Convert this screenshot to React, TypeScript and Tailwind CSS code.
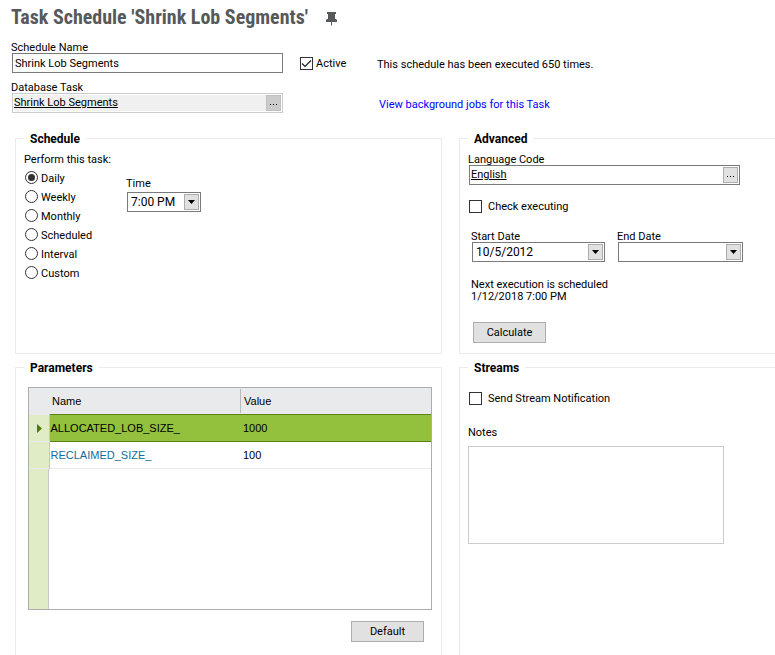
import type { ReactNode } from 'react';

function Pin() {
  return (
    <svg width="11" height="14" viewBox="0 0 11 14" fill="#56595c" aria-hidden="true">
      <path d="M1 0h9v2H9v5h1l1 1v2H6v3.500H5V10H0V8l1-1h1V2H1z" />
    </svg>
  );
}

function Panel({ title, open = false, right = false, children }: {
  title: string;
  open?: boolean;
  right?: boolean;
  children: ReactNode;
}) {
  return (
    <fieldset
      className={`min-w-0 border-[#ebebeb] border-t border-l ${right ? '' : 'border-r'} ${open ? '' : 'border-b'}`}
    >
      <legend className="ml-2 px-1.5 pt-0.5 text-xs leading-[15px] font-bold">{title}</legend>
      {children}
    </fieldset>
  );
}

function FieldLabel({ htmlFor, children }: { htmlFor: string; children: ReactNode }) {
  return (
    <label htmlFor={htmlFor} className="-ml-px block h-[13px] pt-px leading-[13px]">
      {children}
    </label>
  );
}

function Check({ id, label, checked, wide }: { id: string; label: string; checked?: boolean; wide?: boolean }) {
  return (
    <label htmlFor={id} className={`flex items-center ${wide ? 'gap-1.5' : 'gap-[3px]'}`}>
      <span className="grid size-[13px] shrink-0">
        <input
          id={id}
          type="checkbox"
          defaultChecked={checked}
          className="peer col-start-1 row-start-1 size-[13px] appearance-none border border-[#333] bg-white"
        />
        <svg
          className="pointer-events-none col-start-1 row-start-1 hidden size-[13px] peer-checked:block"
          viewBox="0 0 13 13"
          fill="none"
          stroke="#222"
          strokeWidth="1.2"
          aria-hidden="true"
        >
          <path d="M2 6.500L5 9.500l6-6" />
        </svg>
      </span>
      {label}
    </label>
  );
}

function Drop({ id, label, value, width, spaced }: {
  id: string;
  label: string;
  value: string;
  width: string;
  spaced?: boolean;
}) {
  return (
    <div className={`flex flex-col ${spaced ? 'gap-[3px]' : ''} ${width}`}>
      <FieldLabel htmlFor={id}>{label}</FieldLabel>
      <div className="grid h-5 border border-[#7a7a7a] bg-white">
        <select
          id={id}
          defaultValue={value}
          className="col-start-1 row-start-1 w-full appearance-none bg-transparent pl-[3px] text-xs leading-4 outline-none"
        >
          <option value={value}>{value}</option>
        </select>
        <span className="pointer-events-none col-start-1 row-start-1 mr-px grid h-4 w-[15px] place-items-center self-center justify-self-end border border-[#adadad] bg-[#e1e1e1]">
          <svg width="7" height="4" viewBox="0 0 7 4" aria-hidden="true">
            <path d="M0 0h7L3.500 4z" />
          </svg>
        </span>
      </div>
    </div>
  );
}

function Lookup({ id, label, value, muted }: { id: string; label: string; value: string; muted?: boolean }) {
  return (
    <div className="w-[271px]">
      <FieldLabel htmlFor={id}>{label}</FieldLabel>
      <div className={`flex h-5 border p-px ${muted ? 'border-[#ccc]' : 'border-[#7a7a7a]'}`}>
        <input
          id={id}
          readOnly
          defaultValue={value}
          className={`h-4 min-w-0 flex-1 leading-4 underline underline-offset-1 outline-none ${muted ? 'bg-[#f0f0f0]' : 'bg-white'}`}
        />
        <button
          type="button"
          aria-label={`Browse ${label}`}
          className={`grid w-[15px] place-items-center border ${muted ? 'border-[#bfbfbf] bg-[#ccc]' : 'border-[#adadad] bg-[#e1e1e1]'}`}
        >
          <svg width="8" height="6" viewBox="0 0 8 6" shapeRendering="crispEdges" aria-hidden="true">
            <path d="M0 4h1v1H0zM3 4h1v1H3zM6 4h1v1H6z" />
          </svg>
        </button>
      </div>
    </div>
  );
}

function PushButton({ children }: { children: ReactNode }) {
  return (
    <button type="button" className="h-[21px] w-[73px] border border-[#adadad] bg-[#e1e1e1]">
      {children}
    </button>
  );
}

const frequencies = ['Daily', 'Weekly', 'Monthly', 'Scheduled', 'Interval', 'Custom'];

export default function App() {
  return (
    <main className="flex min-h-screen flex-col bg-white font-['Roboto','Noto_Sans',sans-serif] text-[11px] leading-[13px] text-black">
      <header className="flex h-10 items-start gap-[18px] pt-[5px] pr-3 pl-[11px]">
        <h1 className="font-['Roboto_Condensed','Liberation_Sans_Narrow',sans-serif] text-[20px] leading-6 font-bold text-[#56595c]">
          Task Schedule 'Shrink Lob Segments'
        </h1>
        <button type="button" aria-label="Pin" className="mt-[7px]">
          <Pin />
        </button>
      </header>

      <section className="flex h-[90px] px-3">
        <div className="mr-[17px] flex w-[271px] flex-col gap-[7px]">
          <div>
            <FieldLabel htmlFor="name">Schedule Name</FieldLabel>
            <input
              id="name"
              defaultValue="Shrink Lob Segments"
              className="block h-5 w-full border border-[#7a7a7a] px-0.5 outline-none"
            />
          </div>
          <Lookup id="task" label="Database Task" value="Shrink Lob Segments" muted />
        </div>
        <div className="w-[77px] pt-[17px]">
          <Check id="active" label="Active" checked />
        </div>
        <div className="flex flex-col items-start gap-[27px] pt-[18px]">
          <p>This schedule has been executed 650 times.</p>
          <a href="#jobs" className="ml-0.5 text-[#0000ff]">View background jobs for this Task</a>
        </div>
      </section>

      <div className="grid flex-1 grid-cols-[427fr_316fr] grid-rows-[224px_1fr] gap-x-[17px] gap-y-[5px] pl-[15px]">
        <Panel title="Schedule">
          <div className="px-2 pt-1.5">
            <p id="freq">Perform this task:</p>
            <div className="flex gap-9 pt-[2px]">
              <div role="radiogroup" aria-labelledby="freq" className="w-[67px]">
                {frequencies.map((f, i) => (
                  <label key={f} className="flex h-[19px] items-center gap-[3px] pl-px">
                    <input
                      type="radio"
                      name="frequency"
                      defaultChecked={i === 0}
                      className="grid size-[13px] shrink-0 appearance-none place-items-center rounded-full border border-[#333] bg-white before:hidden before:size-[7px] before:rounded-full before:bg-[#333] before:content-[''] checked:before:block"
                    />
                    <span className="pt-0.5">{f}</span>
                  </label>
                ))}
              </div>
              <div className="pt-2">
                <Drop id="time" label="Time" value="7:00 PM" width="w-[74px]" spaced />
              </div>
            </div>
          </div>
        </Panel>

        <Panel title="Advanced" right>
          <div className="pt-[5px] pl-[9px]">
            <Lookup id="lang" label="Language Code" value="English" />
            <div className="pt-[15px]">
              <Check id="executing" label="Check executing" wide />
            </div>
            <div className="flex gap-[13px] pt-4 pl-[3px]">
              <Drop id="start" label="Start Date" value="10/5/2012" width="w-[133px]" />
              <Drop id="end" label="End Date" value="" width="w-[125px]" />
            </div>
            <p className="pt-[17px] pl-0.5 leading-3">
              Next execution is scheduled
              <br />
              1/12/2018 7:00 PM
            </p>
            <div className="pt-[19px] pl-1">
              <PushButton>Calculate</PushButton>
            </div>
          </div>
        </Panel>

        <Panel title="Parameters" open>
          <div className="pt-[11px] pr-[9px] pb-3.5 pl-3">
            <div className="flex h-[223px] flex-col border border-[#adadad]">
              <table className="w-full table-fixed border-collapse text-left font-['Liberation_Sans',Arial,sans-serif]">
                <colgroup>
                  <col className="w-5" />
                  <col className="w-[191px]" />
                  <col />
                </colgroup>
                <thead>
                  <tr className="h-[26px] bg-[#e9eaec]">
                    <th aria-label="Current row" />
                    <th className="py-0.5 pl-[3px] font-normal">Name</th>
                    <th className="p-0 py-px font-normal">
                      <div className="flex h-6 items-center border-l border-[#b9bbbe] pl-[3px]">Value</div>
                    </th>
                  </tr>
                </thead>
                <tbody>
                  <tr className="h-[27px] border-y border-[#5a8415] bg-[#94c13d]">
                    <td className="border-y border-r border-y-[#e9eaec] border-r-[#c4c6c8] bg-[#e0ecc6]">
                      <svg className="ml-2" width="5" height="9" viewBox="0 0 5 9" fill="#4d7a0c" aria-hidden="true">
                        <path d="M0 0l5 4.500L0 9z" />
                      </svg>
                    </td>
                    <td className="pl-px">ALLOCATED_LOB_SIZE_</td>
                    <td className="pl-[3px]">1000</td>
                  </tr>
                  <tr className="h-[27px] border-b border-[#e9eaec]">
                    <td className="border-r border-r-[#c4c6c8] bg-[#e0ecc6]" />
                    <td className="pl-px text-[#0f6d9c]">RECLAIMED_SIZE_</td>
                    <td className="pl-[3px]">100</td>
                  </tr>
                </tbody>
              </table>
              <div className="w-5 flex-1 border-r border-[#c4c6c8] bg-[#e0ecc6]" />
            </div>
            <div className="flex justify-end pt-[11px] pr-2">
              <PushButton>Default</PushButton>
            </div>
          </div>
        </Panel>

        <Panel title="Streams" right open>
          <div className="flex flex-col pt-4 pl-[9px]">
            <Check id="notify" label="Send Stream Notification" wide />
            <label htmlFor="notes" className="-ml-px pt-[21px]">Notes</label>
            <textarea id="notes" className="-ml-px mt-[7px] h-[98px] w-64 resize-none border border-[#ccc] outline-none" />
          </div>
        </Panel>
      </div>
    </main>
  );
}
